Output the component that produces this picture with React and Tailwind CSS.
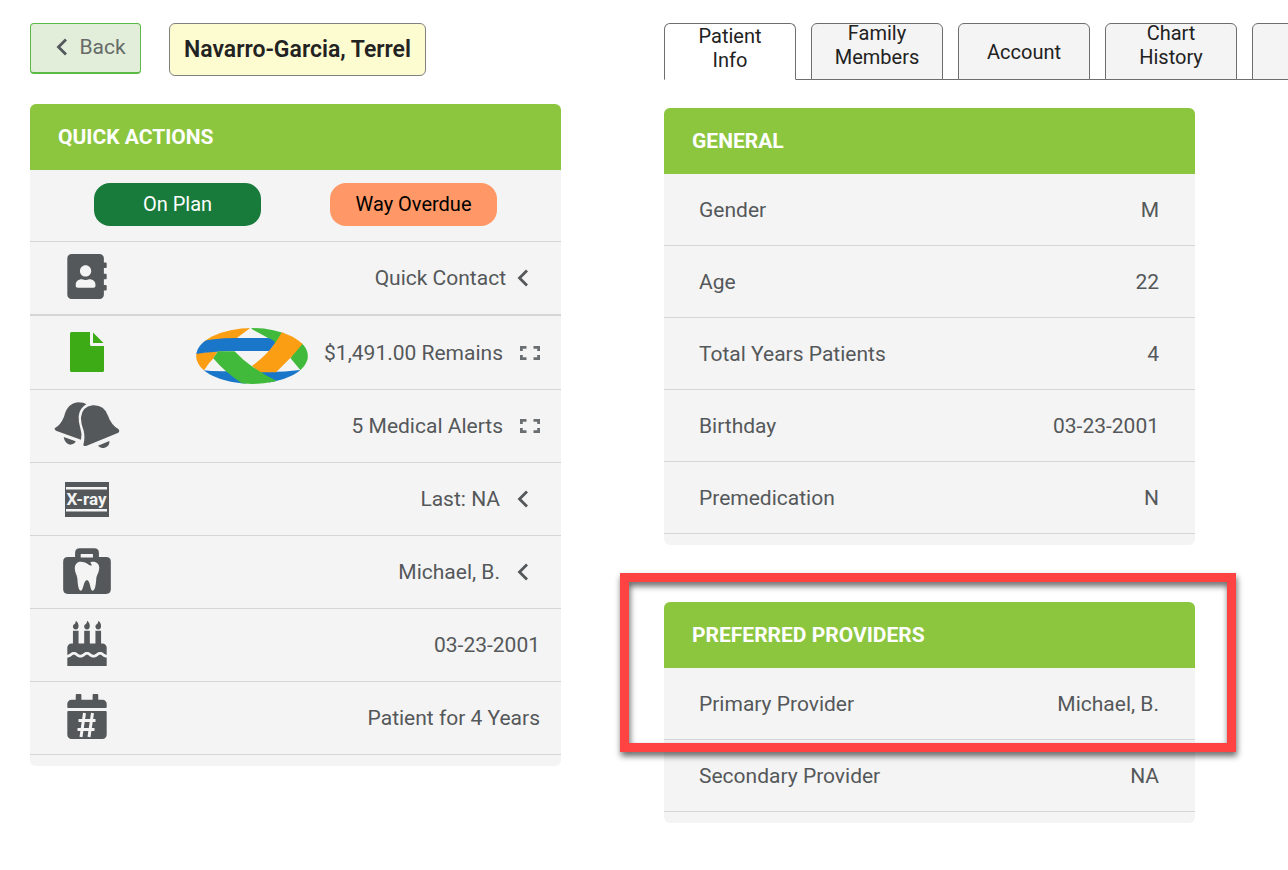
import { FaAddressBook, FaBirthdayCake, FaCalendar } from 'react-icons/fa'

const tabs = [
  { label: 'Patient Info', active: true, pad: 'pb-2' },
  { label: 'Family Members', pad: 'pb-[14px]' },
  { label: 'Account', pad: 'pb-0' },
  { label: 'Chart History', pad: 'pb-[14px]' },
  { label: '', pad: 'pb-0' },
]

const general = [
  { label: 'Gender', value: 'M' },
  { label: 'Age', value: '22' },
  { label: 'Total Years Patients', value: '4' },
  { label: 'Birthday', value: '03-23-2001' },
  { label: 'Premedication', value: 'N' },
]

const providers = [
  { label: 'Primary Provider', value: 'Michael, B.' },
  { label: 'Secondary Provider', value: 'NA' },
]

function Chevron() {
  return (
    <svg viewBox="0 0 12 18" className="w-3 h-[18px] shrink-0" fill="none" stroke="#54585a" strokeWidth="2.8" aria-hidden="true">
      <path d="M10 1.5 2.5 9l7.5 7.5" />
    </svg>
  )
}

function Expand() {
  return (
    <svg viewBox="0 0 20 14" className="w-5 h-[14px] shrink-0" fill="none" stroke="#6a6e70" strokeWidth="2.8" aria-hidden="true">
      <path d="M6.5 1.4H1.4V5M1.4 9v3.6h5.1M13.5 1.4h5.1V5M18.6 9v3.6h-5.1" />
    </svg>
  )
}

function FileIcon() {
  return (
    <svg viewBox="0 0 34 40" className="w-[34px] h-10" fill="#3dab16" aria-hidden="true">
      <path d="M1.5 0H20v12.5q0 1.5 1.5 1.5H34v24.5q0 1.5-1.5 1.5h-31Q0 40 0 38.5v-37Q0 0 1.5 0z" />
      <path d="M23 0.5 33.500 11H23z" />
    </svg>
  )
}

function BellsIcon() {
  return (
    <svg viewBox="40 466 198 138" className="w-[66px] h-[46px]" fill="#54585a" aria-hidden="true">
      <path d="M42 545Q60 535 70 510Q80 470 112 467Q130 467 137 473Q117 484 114 508Q113 528 119 545Q125 562 121 579L46 552Q41 549 42 545z" />
      <path d="M128 594Q134 574 129 552Q120 530 121 512Q124 480 156 476Q190 474 202 507Q212 535 232 546Q239 551 233 558L138 597Q128 600 128 594z" />
      <path d="M69 571L105 584Q101 594 88 594Q72 590 69 571z" />
      <path d="M172 597L206 583Q208 600 190 604Q178 605 172 597z" />
    </svg>
  )
}

function XrayIcon() {
  return (
    <svg viewBox="0 0 44 35" className="w-11 h-[35px] mt-1" role="img" aria-label="X-ray">
      <path fill="#54585a" d="M0 0h44v35H0z" />
      <path fill="#f4f4f4" d="M1 5h41v2.5H1zM1 27h41v2.5H1z" />
      <text x="21.5" y="23" textAnchor="middle" fill="#f4f4f4" fontFamily="Roboto, sans-serif" fontWeight="700" fontSize="17">X-ray</text>
    </svg>
  )
}

function DentalIcon() {
  return (
    <svg viewBox="66 230 144 139" className="w-12 h-[46px]" aria-hidden="true">
      <path fill="#54585a" d="M80 257h22v-12q0-14 14-14h44q14 0 14 14v12h22q14 0 14 14v84q0 14-14 14H80q-14 0-14-14v-84q0-14 14-14z" />
      <path fill="#f4f4f4" d="M119 248h37v11h-37z" />
      <path fill="#f4f4f4" d="M138 277C124 268 102 268 101 291C101 304 108 311 109 323C110 340 112 358 119 359C128 360 126 330 138 327C149 330 147 360 155 359C163 358 165 339 166 323C167 311 175 304 175 289C174 268 150 270 148 274L153 282Q147 285 138 277z" />
    </svg>
  )
}

function CalendarIcon() {
  return (
    <span className="relative">
      <FaCalendar className="w-[40px] h-[45px]" />
      <svg viewBox="0 0 40 45" className="absolute inset-0 w-[40px] h-[45px]" fill="none" stroke="#f4f4f4" strokeWidth="3" aria-hidden="true">
        <path d="M17.5 19 14 43M25.5 19 22 43M11.5 26.5h17M10.5 35.5h17" />
      </svg>
    </span>
  )
}

function PlanLogo() {
  return (
    <svg viewBox="45 54 337 168" className="w-28 h-14 mt-[6px]" role="img" aria-label="Insurance plan">
      <clipPath id="plan-oval">
        <ellipse cx="213.5" cy="138" rx="168" ry="84" />
      </clipPath>
      <g clipPath="url(#plan-oval)">
        <path fill="#fb9e14" d="M40 110V50h173l-48 36-100 12z" />
        <path fill="#41b93a" d="M210 50h100v20l-24 32-24-18-49-27z" />
        <path fill="#fb9e14" d="M40 130l70-6-12 20q-18 18-29 38H40z" />
        <path fill="#1976c8" d="M40 99Q90 84 165 84h97q12 2 22 15l-18 24H162Q90 124 40 133z" />
        <path fill="#1976c8" d="M60 180q35 5 80 4l60 40H60z" />
        <path fill="#1976c8" d="M240 186q60 2 125-7v45H270z" />
        <path fill="#41b93a" d="M364 96h22v86h-26l-31-38z" />
        <path fill="#fb9e14" d="M305 60l64 38-38 44-45 45h-50l-23-19q45-32 70-69 16-22 22-39z" />
        <path fill="#41b93a" d="M97 145l14-21h50q25 27 54 46 32 23 75 44l-50 12h-48Q132 188 97 145z" />
      </g>
    </svg>
  )
}

function Card({ title, children }) {
  return (
    <section className="bg-[#f4f4f4] rounded-md overflow-hidden pb-[11px]">
      <h2 className="h-[66px] px-7 flex items-center bg-[#8cc63f] text-white text-[21px] font-bold uppercase">{title}</h2>
      {children}
    </section>
  )
}

function ActionRow({ icon, children }) {
  return (
    <li className="h-[73px] flex items-center justify-between border-b border-[#d3d5d6] pr-[21px]">
      <span className="w-[113px] pb-[3px] flex justify-center text-[#54585a]">{icon}</span>
      {children}
    </li>
  )
}

function InfoList({ items }) {
  return (
    <dl>
      {items.map((item) => (
        <div key={item.label} className="h-[72px] flex items-center justify-between border-b border-[#d3d5d6] pl-[35px] pr-9">
          <dt>{item.label}</dt>
          <dd>{item.value}</dd>
        </div>
      ))}
    </dl>
  )
}

export default function App() {
  return (
    <div className="grid grid-cols-2 gap-[10px] pl-[30px] pt-[23px] overflow-hidden bg-white text-[21px] leading-6 text-[#54585a] font-['Roboto',sans-serif]">
      <div className="mr-[93px]">
        <div className="flex items-start gap-7 mb-7">
          <button type="button" className="h-[51px] w-[111px] pl-[11px] pb-[2px] flex items-center justify-center gap-[11px] bg-[#e2eed9] border border-b-2 border-[#5bb946] rounded text-[#666b69]">
            <Chevron />
            Back
          </button>
          <h1 className="h-[53px] px-[14px] flex items-center bg-[#fdfbd0] border border-[#808080] rounded-md text-[23px] font-semibold text-[#222]">
            Navarro-Garcia, Terrel
          </h1>
        </div>

        <Card title="Quick Actions">
          <div className="h-[72px] flex justify-center gap-[69px] pt-[13px] border-b border-[#d3d5d6] text-xl">
            <button type="button" className="w-[167px] h-[43px] pb-[2px] rounded-2xl bg-[#187b3b] text-white">On Plan</button>
            <button type="button" className="w-[167px] h-[43px] pb-[2px] rounded-2xl bg-[#ff9866] text-black">Way Overdue</button>
          </div>
          <ul>
            <ActionRow icon={<FaAddressBook className="w-[40px] h-[45px]" />}>
              <button type="button" className="flex items-center gap-[11px] pr-[11px]">Quick Contact <Chevron /></button>
            </ActionRow>
            {/* insurance section starts with a heavier rule */}
            <li className="border-t border-[#d3d5d6] pt-px">
              <ul>
                <ActionRow icon={<FileIcon />}>
                  <span className="flex items-center gap-4">
                    <PlanLogo />
                    <button type="button" className="flex items-center gap-[17px]">$1,491.00 Remains <Expand /></button>
                  </span>
                </ActionRow>
              </ul>
            </li>
            <ActionRow icon={<BellsIcon />}>
              <button type="button" className="flex items-center gap-[17px]">5 Medical Alerts <Expand /></button>
            </ActionRow>
            <ActionRow icon={<XrayIcon />}>
              <button type="button" className="flex items-center gap-[17px] pr-[11px]">Last: NA <Chevron /></button>
            </ActionRow>
            <ActionRow icon={<DentalIcon />}>
              <button type="button" className="flex items-center gap-[17px] pr-[11px]">Michael, B. <Chevron /></button>
            </ActionRow>
            <ActionRow icon={<FaBirthdayCake className="w-[40px] h-[45px]" />}>03-23-2001</ActionRow>
            <ActionRow icon={<CalendarIcon />}>Patient for 4 Years</ActionRow>
          </ul>
        </Card>
      </div>

      <div className="min-w-0">
        <nav className="flex gap-[15px] border-b border-[#6d6e70] mb-7">
          {tabs.map((tab) => (
            <button
              key={tab.label}
              type="button"
              aria-label={tab.label || 'More'}
              className={`w-[132px] h-[57px] -mb-px px-5 shrink-0 flex items-center justify-center border border-[#6d6e70] rounded-t-md text-xl leading-6 text-[#222] ${tab.pad} ${tab.active ? 'bg-white border-b-white' : 'bg-[#f4f4f4]'}`}
            >
              {tab.label}
            </button>
          ))}
        </nav>

        <div className="mr-[93px] flex flex-col gap-[57px]">
          <Card title="General">
            <InfoList items={general} />
          </Card>
          <div className="relative">
            <Card title="Preferred Providers">
              <InfoList items={providers} />
            </Card>
            {/* callout frame around the primary provider */}
            <div className="absolute -top-[29px] -left-11 -right-[41px] h-[179px] border-[9px] border-[#ff4343] drop-shadow-[1px_4px_3px_rgba(0,0,0,0.6)] pointer-events-none" />
          </div>
        </div>
      </div>
    </div>
  )
}
